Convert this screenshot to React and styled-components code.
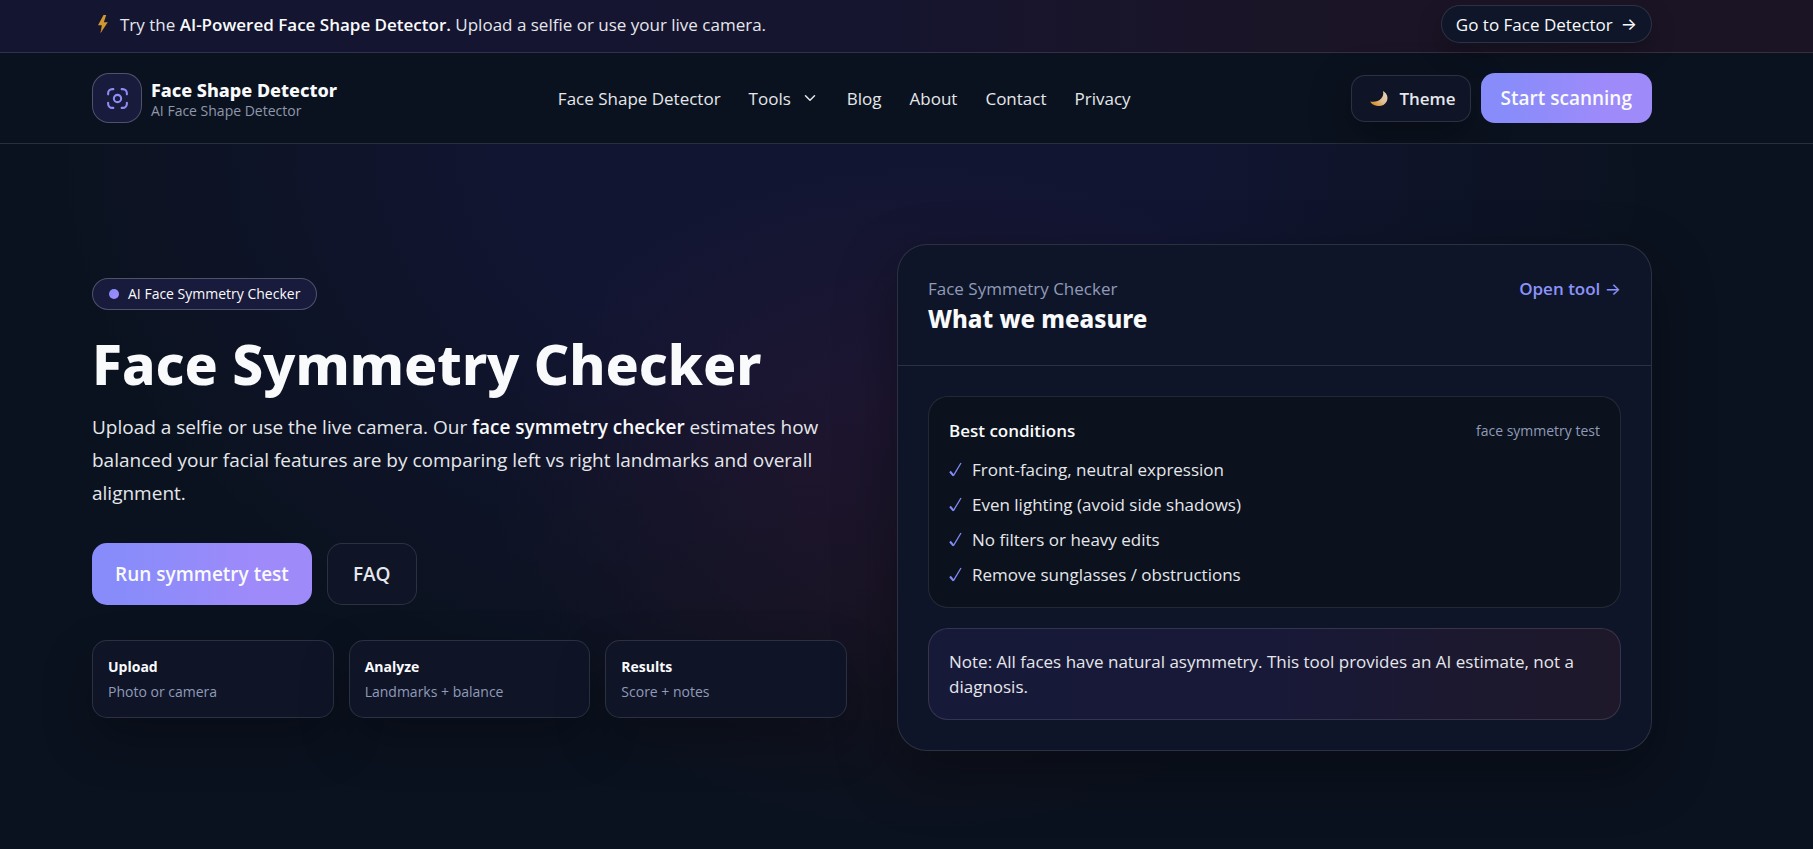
import { useState } from "react";
import styled, { createGlobalStyle } from "styled-components";
import { ChevronDown } from "lucide-react";

const stats = [
  { title: "Upload", text: "Photo or camera" },
  { title: "Analyze", text: "Landmarks + balance" },
  { title: "Results", text: "Score + notes" },
];

const conditions = [
  "Front-facing, neutral expression",
  "Even lighting (avoid side shadows)",
  "No filters or heavy edits",
  "Remove sunglasses / obstructions",
];

function BoltIcon() {
  return (
    <svg width="20" height="20" viewBox="0 0 20 20" aria-hidden="true">
      <path d="M11.5 1 6 11.2h3.8L8.6 19 15.8 8.2h-3.9L14.2 1z" fill="#d0982f" />
      <path d="M9 16.2 8.6 19l1.6-2.5z" fill="#d8603a" />
    </svg>
  );
}

function MoonIcon() {
  return (
    <svg width="20" height="20" viewBox="0 0 20 20" aria-hidden="true">
      <defs>
        <linearGradient id="moon" x1="0" y1="1" x2="1" y2="0">
          <stop offset="0.15" stopColor="#d9902c" />
          <stop offset="0.5" stopColor="#e0bf94" />
          <stop offset="1" stopColor="#e9d6bb" />
        </linearGradient>
      </defs>
      <path
        d="M14 3C18 5.200 19.600 9.400 17.800 13.200c-2.200 4.600-8 6.200-12.800 3.800C3 16 1.800 14.800 1.200 13.400c4.200 1 8.400-.1 11-2.900 2-2.200 2.500-4.900 1.800-7.500z"
        fill="url(#moon)"
      />
    </svg>
  );
}

function ScanIcon() {
  return (
    <svg width="25" height="25" viewBox="0 0 24 24" fill="none" aria-hidden="true">
      <g stroke="#8f8cf8" strokeWidth="2" strokeLinecap="round">
        <path d="M3 8V7a4 4 0 0 1 4-4h1" />
        <path d="M16 3h1a4 4 0 0 1 4 4v1" />
        <path d="M21 16v1a4 4 0 0 1-4 4h-1" />
        <path d="M8 21H7a4 4 0 0 1-4-4v-1" />
        <circle cx="12" cy="12" r="3.500" />
      </g>
    </svg>
  );
}

function CheckIcon() {
  return (
    <svg width="13" height="15" viewBox="0 0 13 15" fill="none" aria-hidden="true">
      <path d="M1 9.500 4.400 13.500" stroke="#818cf8" strokeWidth="2" />
      <path d="M4.300 13.800 12 1" stroke="#818cf8" strokeWidth="1.300" />
    </svg>
  );
}

function App() {
  const [toolsOpen, setToolsOpen] = useState(false);

  return (
    <Page>
      <GlobalStyle />
      <TopBar>
        <TopText>
          <BoltIcon />
          <span>
            Try the <b>AI-Powered Face Shape Detector.</b> Upload a selfie or use
            your live camera.
          </span>
        </TopText>
        <PillLink href="#detector">
          Go to Face Detector <Arrow>→</Arrow>
        </PillLink>
      </TopBar>

      <Header>
        <Brand href="#home">
          <BrandMark>
            <ScanIcon />
          </BrandMark>
          <BrandText>
            <BrandName>Face Shape Detector</BrandName>
            <BrandTag>AI Face Shape Detector</BrandTag>
          </BrandText>
        </Brand>
        <Nav>
          <NavLink href="#detector">Face Shape Detector</NavLink>
          <NavButton
            type="button"
            aria-expanded={toolsOpen}
            onClick={() => setToolsOpen(!toolsOpen)}
          >
            Tools <ChevronDown size={18} />
          </NavButton>
          <NavLink href="#blog">Blog</NavLink>
          <NavLink href="#about">About</NavLink>
          <NavLink href="#contact">Contact</NavLink>
          <NavLink href="#privacy">Privacy</NavLink>
        </Nav>
        <Actions>
          <ThemeButton type="button">
            <MoonIcon /> Theme
          </ThemeButton>
          <StartButton type="button">Start scanning</StartButton>
        </Actions>
      </Header>

      <Hero>
        <Intro>
          <Badge>
            <Dot />
            AI Face Symmetry Checker
          </Badge>
          <Title>Face Symmetry Checker</Title>
          <Lead>
            Upload a selfie or use the live camera. Our{" "}
            <b>face symmetry checker</b> estimates how balanced your facial
            features are by comparing left vs right landmarks and overall
            alignment.
          </Lead>
          <ButtonRow>
            <HeroButton type="button" $primary>
              Run symmetry test
            </HeroButton>
            <HeroButton type="button">FAQ</HeroButton>
          </ButtonRow>
          <Stats>
            {stats.map((stat) => (
              <Stat key={stat.title}>
                <StatTitle>{stat.title}</StatTitle>
                <StatText>{stat.text}</StatText>
              </Stat>
            ))}
          </Stats>
        </Intro>

        <Card>
          <CardHead>
            <div>
              <CardLabel>Face Symmetry Checker</CardLabel>
              <CardTitle>What we measure</CardTitle>
            </div>
            <CardLink href="#tool">
              Open tool <Arrow>→</Arrow>
            </CardLink>
          </CardHead>
          <CardBody>
            <Panel>
              <PanelHead>
                <PanelTitle>Best conditions</PanelTitle>
                <PanelTag>face symmetry test</PanelTag>
              </PanelHead>
              <CheckList>
                {conditions.map((item) => (
                  <CheckItem key={item}>
                    <CheckIcon />
                    {item}
                  </CheckItem>
                ))}
              </CheckList>
            </Panel>
            <Note>
              Note: All faces have natural asymmetry. This tool provides an AI
              estimate, not a diagnosis.
            </Note>
          </CardBody>
        </Card>
      </Hero>
    </Page>
  );
}

const line = "rgba(255, 255, 255, 0.12)";
const accent = "linear-gradient(135deg, #818cf8, #a78bfa)";
const accentFlat = "linear-gradient(90deg, #888cfa 15%, #9f8afa 75%)";
const headingFont = '"Noto Sans", "Open Sans", sans-serif';

const GlobalStyle = createGlobalStyle`
  * {
    box-sizing: border-box;
  }
  body {
    margin: 0;
    background: #0b111e;
    color: #e5e7eb;
    font-family: "Open Sans", "Noto Sans", sans-serif;
    font-size: 17px;
    line-height: 25px;
  }
  button {
    font-family: inherit;
    cursor: pointer;
  }
  a {
    color: inherit;
    text-decoration: none;
  }
  b {
    color: #f9fafb;
    font-weight: 600;
  }
`;

const Page = styled.div`
  min-height: 100vh;
  overflow: hidden;
`;

const Arrow = styled.span`
  font-family: "Inter", sans-serif;
  font-weight: 400;
`;

const TopBar = styled.div`
  display: flex;
  align-items: center;
  justify-content: space-between;
  height: 53px;
  padding: 0 161px 4px 92px;
  border-bottom: 1px solid ${line};
  background: linear-gradient(90deg, #141531, #151530 45%, #1a1427 70%, #1b1424);
`;

const TopText = styled.div`
  display: flex;
  align-items: center;
  gap: 8px;
`;

const PillLink = styled.a`
  display: flex;
  align-items: center;
  gap: 8px;
  height: 38px;
  padding: 0 14px;
  border: 1px solid ${line};
  border-radius: 19px;
  background: #0f1629;
  color: #f9fafb;
  box-shadow: 0 10px 24px rgba(0, 0, 0, 0.25);
`;

const Header = styled.header`
  display: flex;
  align-items: center;
  justify-content: space-between;
  height: 91px;
  padding: 0 161px 0 92px;
  border-bottom: 1px solid ${line};
  background: #0b121f;
`;

const Brand = styled.a`
  display: flex;
  align-items: center;
  gap: 9px;
`;

const BrandMark = styled.span`
  display: flex;
  align-items: center;
  justify-content: center;
  width: 50px;
  height: 50px;
  border: 1px solid rgba(255, 255, 255, 0.24);
  border-radius: 17px;
  background: #191b3c;
`;

const BrandText = styled.span`
  padding-top: 4px;
`;

const BrandName = styled.span`
  display: block;
  color: #f9fafb;
  font-family: ${headingFont};
  font-size: 18px;
  font-weight: 800;
  line-height: 22px;
`;

const BrandTag = styled.span`
  display: block;
  color: #8f97ab;
  font-size: 14px;
  line-height: 20px;
`;

const Nav = styled.nav`
  display: flex;
  align-items: center;
  gap: 28px;
`;

const NavLink = styled.a`
  color: #e5e7eb;
`;

const NavButton = styled.button`
  display: flex;
  align-items: center;
  gap: 10px;
  padding: 0;
  border: none;
  background: none;
  color: #e5e7eb;
  font-size: 17px;
  line-height: 25px;
`;

const Actions = styled.div`
  display: flex;
  align-items: center;
  gap: 10px;
`;

const ThemeButton = styled.button`
  display: flex;
  align-items: center;
  gap: 10px;
  height: 47px;
  padding: 0 14px 0 17px;
  border: 1px solid ${line};
  border-radius: 14px;
  background: #0f1427;
  color: #e5e7eb;
  font-size: 17px;
  font-weight: 600;
  box-shadow: 0 12px 40px rgba(0, 0, 0, 0.35);
`;

const StartButton = styled.button`
  height: 50px;
  padding: 0 20px;
  border: none;
  border-radius: 14px;
  background: ${accentFlat};
  color: #f9fafb;
  font-size: 19px;
  font-weight: 600;
`;

const Hero = styled.main`
  position: relative;
  display: grid;
  grid-template-columns: 1fr 1fr;
  align-items: center;
  gap: 50px;
  padding: 100px 161px 98px 92px;
  background:
    radial-gradient(24% 48% at 51% 50%, rgba(190, 30, 40, 0.07) 30%, transparent),
    radial-gradient(
      44% 82% at 47% 0%,
      rgba(75, 50, 220, 0.1) 40%,
      rgba(75, 50, 220, 0.06) 65%,
      transparent
    ),
    #0b121f;
`;

const Intro = styled.section`
  min-width: 0;
`;

const Badge = styled.div`
  display: flex;
  align-items: center;
  gap: 9px;
  width: fit-content;
  height: 32px;
  padding: 0 16px;
  border: 1px solid rgba(255, 255, 255, 0.24);
  border-radius: 16px;
  background: #191b3c;
  color: #f9fafb;
  font-size: 14px;
`;

const Dot = styled.span`
  width: 10px;
  height: 10px;
  border-radius: 50%;
  background: ${accent};
`;

const Title = styled.h1`
  margin: 24px 0 17px;
  color: #f9fafb;
  font-family: ${headingFont};
  font-size: 55px;
  font-weight: 800;
  line-height: 60px;
`;

const Lead = styled.p`
  margin: 0 0 33px;
  font-size: 19px;
  line-height: 33px;
`;

const ButtonRow = styled.div`
  display: flex;
  gap: 15px;
  margin-bottom: 35px;
`;

const HeroButton = styled.button`
  height: 62px;
  padding: 0 ${(props) => (props.$primary ? "23px" : "25px")};
  border: ${(props) => (props.$primary ? "none" : "1px solid " + line)};
  border-radius: 15px;
  background: ${(props) => (props.$primary ? accentFlat : "#0f1427")};
  color: ${(props) => (props.$primary ? "#f9fafb" : "#e5e7eb")};
  font-size: 19px;
  font-weight: 600;
`;

const Stats = styled.div`
  display: grid;
  grid-template-columns: repeat(3, 1fr);
  gap: 15px;
`;

const Stat = styled.div`
  padding: 15px;
  border: 1px solid ${line};
  border-radius: 15px;
  background: #0f1427;
  box-shadow: 0 22px 50px rgba(0, 0, 0, 0.25);
  line-height: 21px;
`;

const StatTitle = styled.div`
  margin-bottom: 4px;
  color: #f9fafb;
  font-size: 14px;
  font-weight: 700;
`;

const StatText = styled.div`
  color: #8f9bb8;
  font-size: 14px;
`;

const Card = styled.section`
  border: 1px solid ${line};
  border-radius: 30px;
  background: #0f1528;
  box-shadow: 0 22px 60px rgba(0, 0, 0, 0.35);
`;

const CardHead = styled.div`
  display: flex;
  justify-content: space-between;
  padding: 30px;
  border-bottom: 1px solid ${line};
`;

const CardLabel = styled.div`
  color: #8f9bb8;
  line-height: 28px;
`;

const CardTitle = styled.h2`
  margin: 0;
  color: #f9fafb;
  font-family: ${headingFont};
  font-size: 24px;
  font-weight: 800;
  line-height: 32px;
`;

const CardLink = styled.a`
  color: #8b93fa;
  font-weight: 600;
  line-height: 28px;
`;

const CardBody = styled.div`
  display: flex;
  flex-direction: column;
  gap: 20px;
  padding: 30px;
`;

const Panel = styled.div`
  padding: 20px;
  border: 1px solid rgba(255, 255, 255, 0.1);
  border-radius: 20px;
  background: #0b111d;
`;

const PanelHead = styled.div`
  display: flex;
  align-items: center;
  justify-content: space-between;
  margin-bottom: 12px;
  line-height: 28px;
`;

const PanelTitle = styled.h3`
  margin: 0;
  color: #f9fafb;
  font-size: 17px;
  font-weight: 600;
`;

const PanelTag = styled.span`
  color: #8f9bb8;
  font-size: 14px;
`;

const CheckList = styled.ul`
  display: flex;
  flex-direction: column;
  gap: 10px;
  margin: 0;
  padding: 0;
  list-style: none;
`;

const CheckItem = styled.li`
  display: flex;
  align-items: center;
  gap: 10px;
`;

const Note = styled.div`
  padding: 20px;
  border: 1px solid ${line};
  border-radius: 20px;
  background: linear-gradient(90deg, #171939, #181938 50%, #1c182e 80%, #1e182a);
`;

export default App;
